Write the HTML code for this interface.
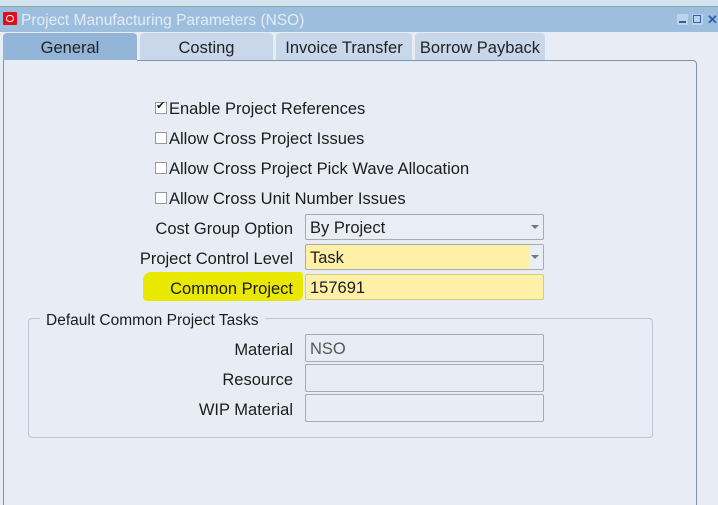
<!DOCTYPE html><html><head><style>
html,body{margin:0;width:718px;height:505px;overflow:hidden}
body{background:#e8edf5;font-family:"Liberation Sans",Arial,sans-serif;font-size:16.5px;color:#1c1c1c;position:relative}
.a{position:absolute}
.tab{position:absolute;top:33px;height:27px;background:#c8d7e9;border-radius:4px 4px 0 0;text-align:center;line-height:31px;color:#222}
.cb{position:absolute;left:155px;width:10px;height:10px;border:1px solid #999;background:#fff}
.lbl{position:absolute;text-align:right;white-space:nowrap}
.fld{position:absolute;height:26px;border:1px solid #aaa;border-radius:2px;box-sizing:border-box;padding-left:4px;line-height:27px}
.dd{position:absolute;right:4px;top:10px;width:0;height:0;border-left:4px solid transparent;border-right:4px solid transparent;border-top:4px solid #777}
</style></head><body>
<div class="a" style="left:0;top:0;width:718px;height:7px;background:#d5e2ef"></div>
<div class="a" style="left:0;top:6px;width:718px;height:1px;background:#8aa"></div>
<div class="a" style="left:0;top:7px;width:718px;height:25px;background:#9dbfdd"></div>
<div class="a" style="left:3px;top:12px;width:14px;height:13px;background:#e0101a;border-radius:1px"></div>
<div class="a" style="left:6px;top:15px;width:6px;height:5px;border:1.5px solid #fff;border-radius:4px"></div>
<div class="a" style="left:21px;top:12px;color:#e3ecf5;font-size:15.5px">Project Manufacturing Parameters (NSO)</div>
<div class="a" style="left:677px;top:14px;width:11px;height:11px;background:#bcd3ea"><div class="a" style="left:2px;top:7px;width:7px;height:2px;background:#2a60b0"></div></div>
<div class="a" style="left:692px;top:14px;width:11px;height:11px;background:#bcd3ea"><div class="a" style="left:1px;top:1px;width:6px;height:6px;border:1.5px solid #2a60b0"></div></div>
<div class="a" style="left:707px;top:12px;color:#2a60b0;font-weight:bold;font-size:13px">✕</div>
<div class="tab" style="left:3px;width:134px;background:#93b5d8">General</div>
<div class="tab" style="left:140px;width:133px">Costing</div>
<div class="tab" style="left:276px;width:136px">Invoice Transfer</div>
<div class="tab" style="left:415px;width:130px">Borrow Payback</div>
<div class="a" style="left:3px;top:60px;width:694px;height:460px;border:1px solid #7f95ad;border-radius:0 4px 0 0;box-sizing:border-box"></div>
<div class="a" style="left:4px;top:60px;width:133px;height:1px;background:#e8edf5"></div>
<div class="cb" style="top:102px"><span class="a" style="left:0;top:-4px;font-size:11px">✔</span></div>
<div class="a" style="left:169px;top:100px">Enable Project References</div>
<div class="cb" style="top:132px"></div><div class="a" style="left:169px;top:130px">Allow Cross Project Issues</div>
<div class="cb" style="top:162px"></div><div class="a" style="left:169px;top:160px">Allow Cross Project Pick Wave Allocation</div>
<div class="cb" style="top:192px"></div><div class="a" style="left:169px;top:190px">Allow Cross Unit Number Issues</div>
<div class="a" style="left:143px;top:272px;width:160px;height:29px;background:#e8e800;border-radius:8px 3px 6px 4px"></div>
<div class="lbl" style="right:425px;top:220px">Cost Group Option</div>
<div class="lbl" style="right:425px;top:250px">Project Control Level</div>
<div class="lbl" style="right:425px;top:280px">Common Project</div>
<div class="fld" style="left:305px;top:214px;width:239px;background:#e9eef6">By Project<div class="dd"></div></div>
<div class="fld" style="left:305px;top:244px;width:239px;background:#fff0a8;border-color:#aaa">Task<div class="a" style="right:0;top:0;width:14px;height:24px;background:#e9eef6"></div><div class="dd"></div></div>
<div class="fld" style="left:305px;top:274px;width:239px;background:#fff0a8;border-color:#d8c880">157691</div>
<div class="a" style="left:28px;top:318px;width:625px;height:120px;border:1px solid #b8c6d6;border-radius:4px;box-sizing:border-box"></div>
<div class="a" style="left:40px;top:312px;padding:0 6px;background:#e8edf5;font-size:15.5px">Default Common Project Tasks</div>
<div class="lbl" style="right:425px;top:341px">Material</div>
<div class="lbl" style="right:425px;top:371px">Resource</div>
<div class="lbl" style="right:425px;top:401px">WIP Material</div>
<div class="fld" style="left:305px;top:334px;width:239px;height:28px;background:#e8edf5;color:#555;line-height:29px">NSO</div>
<div class="fld" style="left:305px;top:364px;width:239px;height:28px;background:#e8edf5"></div>
<div class="fld" style="left:305px;top:394px;width:239px;height:28px;background:#e8edf5"></div>
</body></html>
